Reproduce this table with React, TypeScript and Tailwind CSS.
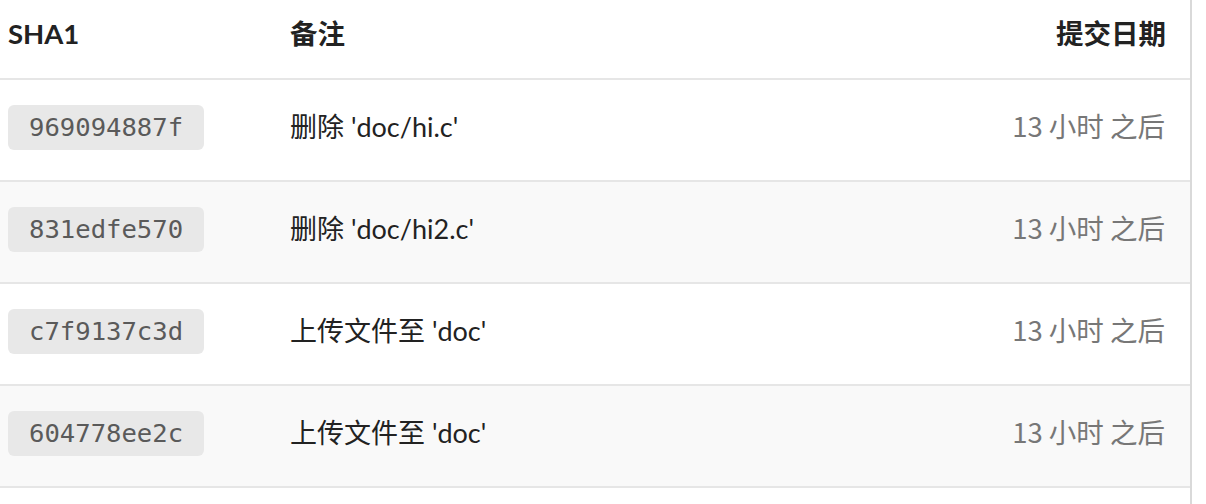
import React from "react";

const rows = [
  { sha: "969094887f", msg: "删除 'doc/hi.c'" },
  { sha: "831edfe570", msg: "删除 'doc/hi2.c'" },
  { sha: "c7f9137c3d", msg: "上传文件至 'doc'" },
  { sha: "604778ee2c", msg: "上传文件至 'doc'" },
];

const sans = { fontFamily: "Lato, 'Noto Sans CJK SC', sans-serif" };

export default function App() {
  return (
    <div className="w-[1206px] h-[504px] bg-white overflow-hidden" style={sans}>
      <div className="w-[1192px] h-[504px] border-r-2 border-[#d9d9d9]">
        <div className="flex items-center h-[80px] pb-[10px] border-b-2 border-[#e6e6e6] text-[27.5px] font-bold text-[#222]">
          <div className="w-[290px] pl-[8px]">SHA1</div>
          <div className="flex-1">备注</div>
          <div className="pr-[24px]">提交日期</div>
        </div>
        {rows.map((r, i) => (
          <div
            key={r.sha}
            className={`flex items-center h-[102px] border-b-2 border-[#e6e6e6] ${i % 2 === 1 ? "bg-[#f9f9f9]" : "bg-white"}`}
          >
            <div className="w-[290px] pl-[8px] pb-[6px]">
              <span
                className="inline-flex items-center h-[45px] px-[21px] rounded-[6px] bg-[#e8e8e8] text-[#5a5a5a] text-[25.6px]"
                style={{ fontFamily: "'DejaVu Sans Mono', monospace" }}
              >
                {r.sha}
              </span>
            </div>
            <div className="flex-1 text-[27px] text-[#222] pb-[6px]">{r.msg}</div>
            <div
              className="pr-[25px] text-[27.5px] text-[#777] pb-[8px]"
              style={{ fontFamily: "'Noto Sans CJK SC', sans-serif" }}
            >
              13 小时 之后
            </div>
          </div>
        ))}
      </div>
    </div>
  );
}
